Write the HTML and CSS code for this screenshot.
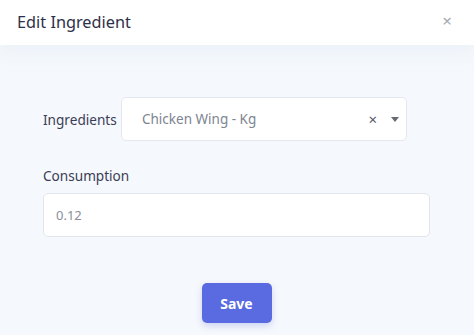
FILE: index.html
```html
<!DOCTYPE html>
<html>
<head>
<meta charset="utf-8">
<link rel="stylesheet" href="styles.css">
</head>
<body>
<div class="modal">
  <div class="header">
    <h1 class="title">Edit Ingredient</h1>
    <span class="close">×</span>
  </div>
  <div class="content">
    <div class="row">
      <label class="label label-inline">Ingredients</label>
      <div class="select">
        <span class="select-value">Chicken Wing - Kg</span>
        <span class="select-clear">×</span>
        <span class="select-arrow"></span>
      </div>
    </div>
    <div class="group">
      <label class="label">Consumption</label>
      <div class="input">0.12</div>
    </div>
    <div class="actions">
      <button class="btn">Save</button>
    </div>
  </div>
</div>
</body>
</html>
```
FILE: styles.css
```css
* { box-sizing: border-box; }
html, body { margin: 0; padding: 0; }
body {
  width: 474px;
  height: 335px;
  overflow: hidden;
  font-family: "Noto Sans", "Open Sans", sans-serif;
  background: #f5f8fc;
}
.modal { width: 474px; height: 335px; }
.header {
  height: 45px;
  background: #fff;
  display: flex;
  align-items: center;
  justify-content: space-between;
  padding: 0 22px 0 17px;
  position: relative;
  box-shadow: 0 8px 16px rgba(230, 236, 246, 0.55);
}
.title {
  margin: 0;
  font-size: 16.3px;
  font-weight: 400;
  color: #2e2f48;
  padding-bottom: 2px;
}
.close {
  font-size: 17px;
  color: #a6a9b2;
  line-height: 1;
  padding-bottom: 4px;
}
.content {
  padding: 52px 44px 0 43px;
}
.row {
  display: flex;
  align-items: center;
}
.label {
  font-size: 13.6px;
  color: #3b3d55;
}
.label-inline { width: 78px; }
.select {
  width: 286px;
  height: 44px;
  background: #fff;
  border: 1px solid #e4e7ee;
  border-radius: 5px;
  display: flex;
  align-items: center;
  padding: 0 0 0 20px;
}
.select-value {
  flex: 1;
  font-size: 13.5px;
  color: #7d8492;
}
.select-clear {
  font-size: 15px;
  color: #555a66;
  margin-right: 14px;
}
.select-arrow {
  width: 0;
  height: 0;
  border-left: 4px solid transparent;
  border-right: 4px solid transparent;
  border-top: 5px solid #666a75;
  margin-right: 7px;
}
.group {
  margin-top: 25px;
  display: flex;
  flex-direction: column;
}
.group .label { line-height: 20px; margin-bottom: 7px; }
.input {
  width: 387px;
  height: 44px;
  background: #fff;
  border: 1px solid #e2e5ec;
  border-radius: 5px;
  display: flex;
  align-items: center;
  padding-left: 12px;
  font-size: 13px;
  color: #8a8f99;
}
.actions {
  display: flex;
  justify-content: center;
  margin-top: 46px;
}
.btn {
  width: 70px;
  height: 40px;
  border: none;
  border-radius: 5px;
  background: #5a6ae0;
  color: #fff;
  font-family: "Noto Sans", "Open Sans", sans-serif;
  font-size: 14px;
  font-weight: 700;
  box-shadow: 0 3px 6px rgba(90, 106, 224, 0.25);
}
```
